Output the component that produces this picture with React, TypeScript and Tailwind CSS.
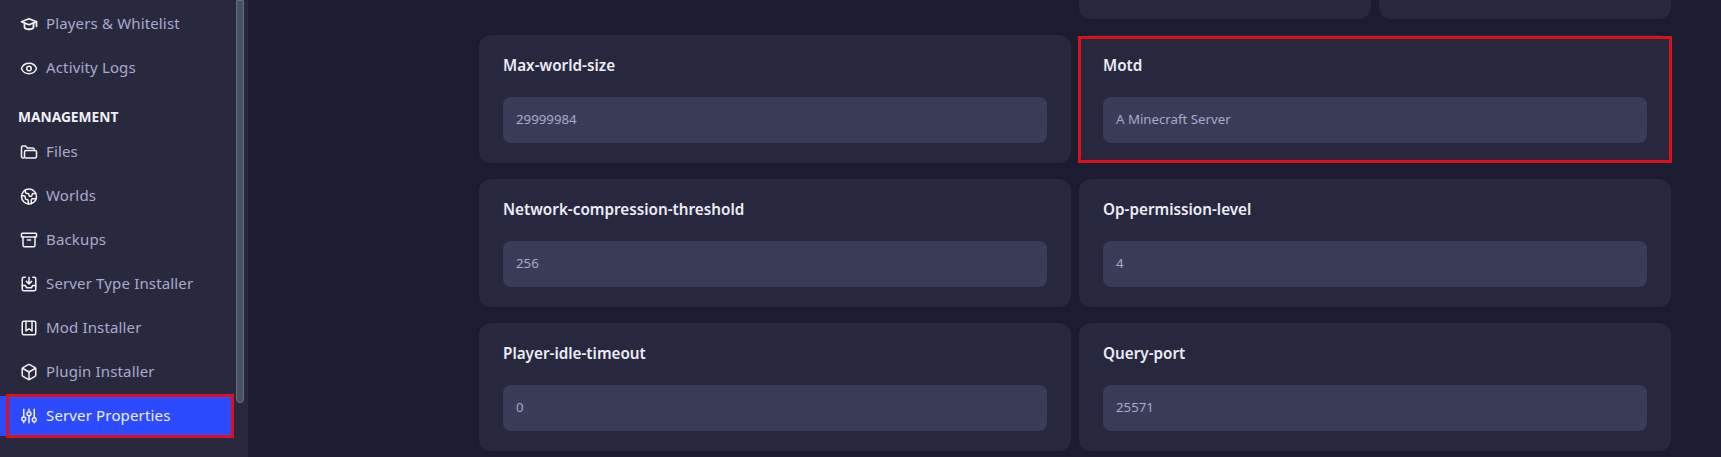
import type { ReactNode } from 'react';
import { Archive, Box, Earth, Eye } from 'lucide-react';
import { TbSchool } from 'react-icons/tb';

const FONT = "font-['Noto_Sans','Open_Sans',sans-serif]";

function Glyph({ children }: { children: ReactNode }) {
  return (
    <svg width="18" height="18" viewBox="0 0 24 24" fill="none" stroke="currentColor" strokeWidth="2" strokeLinecap="round" strokeLinejoin="round">
      {children}
    </svg>
  );
}

function NavItem({ icon, label, active }: { icon: ReactNode; label: string; active?: boolean }) {
  return (
    <div className={`relative flex h-10 w-[232px] items-center gap-[8px] pl-5 text-[15px] tracking-[0.15px] ${active ? 'bg-[#2c4bff] text-[#eef0ff]' : 'text-[#a9a9cc]'}`}>
      <span className="flex w-[18px] justify-center text-[#f2f2f8]">{icon}</span>
      <span className="pb-[1px]">{label}</span>
      {active && <div className="absolute -top-[2px] -bottom-[2px] left-[6px] -right-[2px] border-[3px] border-[#dc0f1e]" />}
    </div>
  );
}

function Field({ label, value, marked }: { label: string; value: string; marked?: boolean }) {
  return (
    <div className="relative rounded-xl bg-[#27283d] px-6 py-5">
      <div className="pb-[1px] text-[15.25px] leading-[21px] font-semibold text-[#ececf4]">{label}</div>
      <div className="mt-5 flex h-[46px] items-center rounded-lg bg-[#3a3b56] pl-[13px] pr-3 text-[13.25px] text-[#a9a9cc]">{value}</div>
      {marked && <div className="absolute -left-[1px] -right-[1px] top-[1px] bottom-0 border-[3px] border-[#dc0f1e]" />}
    </div>
  );
}

export default function App() {
  const fields = [
    ['Max-world-size', '29999984'],
    ['Motd', 'A Minecraft Server'],
    ['Network-compression-threshold', '256'],
    ['Op-permission-level', '4'],
    ['Player-idle-timeout', '0'],
    ['Query-port', '25571'],
  ];

  return (
    <div className={`flex h-[457px] w-full overflow-hidden bg-[#1b1c30] ${FONT}`}>
      <aside className="flex h-full w-[248px] shrink-0 bg-[#29293e] pr-1">
        <nav className="flex w-[236px] flex-col gap-1 pt-1">
          <NavItem icon={<TbSchool size={20} strokeWidth={2.4} />} label="Players & Whitelist" />
          <NavItem icon={<Eye size={19} />} label="Activity Logs" />
          <div className="pl-[18px] pt-[15px] pb-[1px] text-[13.75px] leading-5 font-bold text-[#f0f0f6]">MANAGEMENT</div>
          <NavItem
            icon={
              <Glyph>
                <path d="M5 20H4a2 2 0 0 1-2-2V6a2 2 0 0 1 2-2h3.5l2 2.5H17a2 2 0 0 1 2 2V10" />
                <rect x="6" y="10" width="16" height="10" rx="2" />
              </Glyph>
            }
            label="Files"
          />
          <NavItem icon={<Earth size={19} />} label="Worlds" />
          <NavItem icon={<Archive size={18} />} label="Backups" />
          <NavItem
            icon={
              <Glyph>
                <path d="M7 3H5a2 2 0 0 0-2 2v14a2 2 0 0 0 2 2h14a2 2 0 0 0 2-2V5a2 2 0 0 0-2-2h-2" />
                <path d="M3 14h4l2 3h6l2-3h4" />
                <path d="M12 3v9M8.5 8.5 12 12l3.5-3.5" />
              </Glyph>
            }
            label="Server Type Installer"
          />
          <NavItem
            icon={
              <Glyph>
                <rect x="3" y="3" width="18" height="18" rx="2" />
                <path d="M8 3v13l4-3 4 3V3" />
              </Glyph>
            }
            label="Mod Installer"
          />
          <NavItem icon={<Box size={18} />} label="Plugin Installer" />
          <NavItem
            icon={
              <Glyph>
                <path d="M5 3v10M5 19v2M12 3v3M12 12v9M19 3v11M19 20v1" />
                <circle cx="5" cy="16" r="2.6" />
                <circle cx="12" cy="9" r="2.6" />
                <circle cx="19" cy="17" r="2.6" />
              </Glyph>
            }
            label="Server Properties"
            active
          />
        </nav>
        <div className="h-[403px] w-2 rounded-b-[4px] border border-[#64707f] bg-[#475363]" />
      </aside>
      <main className="min-w-0 flex-1 pl-[231px] pr-[50px]">
        <div className="grid grid-cols-2 gap-x-2 gap-y-4">
          <div className="h-[19px]" />
          <div className="grid h-[19px] grid-cols-2 gap-x-2">
            <div className="rounded-b-xl bg-[#27283d]" />
            <div className="rounded-b-xl bg-[#27283d]" />
          </div>
          {fields.map(([label, value]) => (
            <Field key={label} label={label} value={value} marked={label === 'Motd'} />
          ))}
        </div>
      </main>
    </div>
  );
}
